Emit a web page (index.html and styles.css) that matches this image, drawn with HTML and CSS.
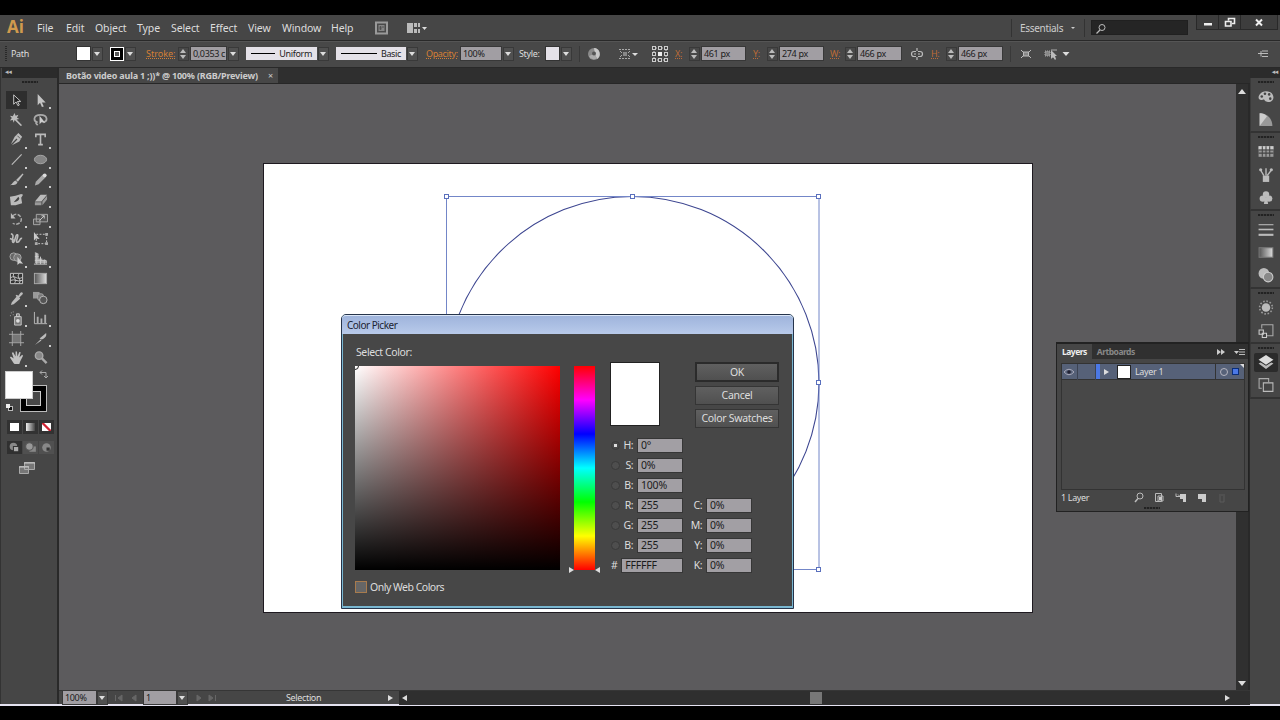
FILE: index.html
```
<!DOCTYPE html>
<html lang="en">
<head>
    <meta charset="UTF-8">
    <meta name="viewport" content="width=device-width, initial-scale=1.0">
    <title>Botão video aula 1</title>
    <link rel="stylesheet" href="styles.css">
</head>
<body>

    <div class="app">
        <header class="menubar">
            <div class="logo">Ai</div>
            <nav class="menus">
                <span class="m-file">File</span>
                <span class="m-edit">Edit</span>
                <span class="m-object">Object</span>
                <span class="m-type">Type</span>
                <span class="m-select">Select</span>
                <span class="m-effect">Effect</span>
                <span class="m-view">View</span>
                <span class="m-window">Window</span>
                <span class="m-help">Help</span>
            </nav>
            <svg class="bridge" width="14" height="14" viewBox="0 0 14 14"><rect x="1" y="1.500" width="11" height="11" fill="#4a4a4a" stroke="#9a9a9a" stroke-width="2"/><rect x="3.500" y="4" width="6" height="6" fill="#858585"/><path d="M5 5.500h1v3h-1zM7 6h2" fill="#444" stroke="#555"/></svg>
            <svg class="arrange" width="22" height="14" viewBox="0 0 22 14"><path d="M1 2h6v10h-6zM8 2h3v4h-3zM12 2h2v4h-2zM8 8h3v4h-3zM12 8h2v4h-2z" fill="#bbb"/><path d="M16 6h5l-2.500 3z" fill="#ddd"/></svg>
            <div class="workspace">Essentials <i class="caret"></i></div>
            <div class="search">
                <svg width="12" height="12" viewBox="0 0 12 12"><circle cx="7" cy="4.500" r="3" fill="none" stroke="#bbb"/><path d="M5 7L1.500 10.500" stroke="#bbb" stroke-width="1.300"/></svg>
            </div>
            <div class="window-buttons">
                <span><svg width="12" height="11" viewBox="0 0 12 11"><path d="M2 6h8v2.500h-8z" fill="#eee"/></svg></span>
                <span><svg width="12" height="11" viewBox="0 0 12 11"><path d="M4.500 3.500v-2h6v5h-2.500M1.500 4.500h5.500v4.500h-5.500z" fill="none" stroke="#eee" stroke-width="1.600"/></svg></span>
                <span class="close"><svg width="12" height="11" viewBox="0 0 12 11"><path d="M3 2.500l6 6M9 2.500l-6 6" stroke="#eee" stroke-width="2"/></svg></span>
            </div>
        </header>

        <div class="controls">
            <i class="grip-v"></i>
            <span class="c-path">Path</span>
            <i class="swatch fill"></i><i class="drop"></i>
            <i class="swatch stroke"></i><i class="drop"></i>
            <span class="c-stroke link">Stroke:</span>
            <i class="spin"></i><span class="field w36">0,0353 c</span><i class="drop"></i>
            <span class="line-field profile"><b></b>Uniform</span><i class="drop"></i>
            <span class="line-field brush"><b></b>Basic</span><i class="drop"></i>
            <span class="c-opacity link">Opacity:</span>
            <span class="field w40">100%</span><i class="drop"></i>
            <span class="c-style">Style:</span>
            <i class="swatch style"></i><i class="drop"></i>
            <i class="sep"></i>
            <svg class="c-recolor" width="14" height="14" viewBox="0 0 14 14"><circle cx="7" cy="7" r="6" fill="#8a8a8a"/><path d="M7 1a6 6 0 0 1 3 11l-2-5z" fill="#c8c8c8"/><path d="M2 9a5 5 0 0 0 8 2l-3-4z" fill="#aaa"/><circle cx="7" cy="6.500" r="2" fill="#555"/></svg>
            <svg class="c-align" width="20" height="12" viewBox="0 0 20 12"><path d="M1 1.500h12M1 10.500h12" stroke="#aaa" stroke-dasharray="2 1"/><path d="M2 3l2 2M12 3l-2 2M2 9l2-2M12 9l-2-2" stroke="#aaa"/><path d="M5 4h4v4h-4z" fill="#888"/><path d="M14 5h6l-3 3z" fill="#ddd"/></svg>
            <svg class="c-ref" width="16" height="16" viewBox="0 0 16 16"><g fill="none" stroke="#ccc"><path d="M2 2h12v12h-12z" stroke-dasharray="1 1"/><g fill="#444"><rect x=".5" y=".5" width="3" height="3"/><rect x="6.500" y=".5" width="3" height="3"/><rect x="12.500" y=".5" width="3" height="3"/><rect x=".5" y="6.500" width="3" height="3"/><rect x="12.500" y="6.500" width="3" height="3"/><rect x=".5" y="12.500" width="3" height="3"/><rect x="6.500" y="12.500" width="3" height="3"/><rect x="12.500" y="12.500" width="3" height="3"/></g></g><path d="M6 6h4v4h-4z" fill="#eee"/></svg>
            <span class="c-x link dim">X:</span><i class="spin"></i><span class="field w45">461 px</span>
            <span class="c-y link dim">Y:</span><i class="spin"></i><span class="field w45">274 px</span>
            <span class="c-w link dim">W:</span><i class="spin"></i><span class="field w45">466 px</span>
            <svg class="c-link" width="14" height="14" viewBox="0 0 14 14"><path d="M6 4.500h-2a2.500 2.500 0 0 0 0 5h2M8 4.500h2a2.500 2.500 0 0 1 0 5h-2M4 7h2M8 7h2M7 1v3M7 10v3" fill="none" stroke="#bbb" stroke-width="1.200"/></svg>
            <span class="c-h link dim">H:</span><i class="spin"></i><span class="field w45">466 px</span>
            <i class="sep far"></i>
            <svg class="c-isolate" width="12" height="12" viewBox="0 0 12 12"><path d="M1 2l2 2M11 2L9 4M1 10l2-2M11 10L9 8" stroke="#bbb"/><rect x="3.500" y="4" width="5" height="4" fill="#888" stroke="#bbb"/></svg>
            <svg class="c-similar" width="27" height="14" viewBox="0 0 27 14"><path d="M1 4h5v5h-5z" fill="#888" stroke="#aaa" stroke-dasharray="1 1"/><path d="M7 3h6M8 10h3" stroke="#aaa"/><path d="M7 3v9l2-2 2 3 1-1-1-3h2z" fill="#bbb"/><path d="M18.500 5h7l-3.500 4z" fill="#ddd"/></svg>
            <svg class="c-menu" width="12" height="10" viewBox="0 0 12 10"><path d="M5 2h6M1 4.500h10M5 7.500h6M4 2v5.500" fill="none" stroke="#bbb"/></svg>
        </div>

        <div class="workarea">
            <aside class="tools">
                <div class="collapse">◂◂</div>
                <i class="grip-h"></i>
                <div class="tool-grid">
                    <span class="on"><svg viewBox="0 0 16 16"><path d="M5 2v10l2.500-2.500 2 4 1.500-.7-2-3.800h3.500z" fill="#222" stroke="#ccc"/></svg></span>
                    <span class="more"><svg viewBox="0 0 16 16"><path d="M5 1v12l2.500-2.500 2 4.500 2-.7-2-4.300h4z" fill="#c4c4c4"/></svg></span>
                    <span><svg viewBox="0 0 16 16"><path d="M6 1l1 3 3-1-1.500 3 2.500 1.500-3 .5L14 14l-1.500 1L6 8.500l-1 3-1-3-3 .5 2-2.500L1 4l3 .5z" fill="#bbb"/></svg></span>
                    <span><svg viewBox="0 0 16 16"><path d="M5 11c-5-1-5-8 3-8s8 7 3 8M4 10c-2 2 0 3 1 4" fill="none" stroke="#aaa" stroke-width="1.800"/><path d="M7 4v9l2-2 4 .5z" fill="#ccc"/></svg></span>
                    <span class="more"><svg viewBox="0 0 16 16"><path d="M10 1l4 4-3 5-8 4 6-6-1-1-6 6 4-8z" fill="#bbb"/><path d="M9 4l3 3" stroke="#555"/></svg></span>
                    <span class="more"><svg viewBox="0 0 16 16"><path d="M3 5.500v-3h10v3M8 2.500v11M5.500 13.500h5" fill="none" stroke="#bbb" stroke-width="1.700"/></svg></span>
                    <span class="more"><svg viewBox="0 0 16 16"><path d="M3 13.500L13.500 2.500" stroke="#bbb" stroke-width="1.200"/></svg></span>
                    <span class="more"><svg viewBox="0 0 16 16"><ellipse cx="8" cy="8" rx="6.500" ry="4.500" fill="#858585" stroke="#aaa"/></svg></span>
                    <span class="more"><svg viewBox="0 0 16 16"><path d="M14.500 1.500l1 1-6 8-2-2zM7 9l2 2c-1 3-4 3-8 3 3-1 3-4 6-5z" fill="#bbb"/></svg></span>
                    <span class="more"><svg viewBox="0 0 16 16"><path d="M11 2l3 3-8 8-4 1.500 1-4z" fill="#aaa"/><circle cx="12.500" cy="3.500" r="2" fill="#ddd"/></svg></span>
                    <span><svg viewBox="0 0 16 16"><path d="M1 5l6-1 6-2 2 1-2 3 1 6-7 2H2z" fill="#bbb"/><path d="M5 11l5-6 1 2c-1 3-3 3-6 4z" fill="#444"/></svg></span>
                    <span class="more"><svg viewBox="0 0 16 16"><path d="M8 3h7l-6 7H2z" fill="#bbb"/><path d="M2 11h7v3H2zM10 10l5-6v4l-5 6z" fill="#999"/></svg></span>
                    <span class="more"><svg viewBox="0 0 16 16"><path d="M4 4c5-4 10 1 9 5s-6 5-9 3" fill="none" stroke="#aaa" stroke-width="1.600" stroke-dasharray="4 1.500"/><path d="M2 1v6h5z" fill="#bbb"/></svg></span>
                    <span class="more"><svg viewBox="0 0 16 16"><path d="M3.500 2.500h12v8h-12zM.500 7.500h7v6h-7z" fill="#555" stroke="#aaa"/><path d="M7 9l5-5M12 7V4H9" fill="none" stroke="#ccc"/></svg></span>
                    <span class="more"><svg viewBox="0 0 16 16"><path d="M2 3c5 1 0 7 2 9s3-9 5-8-3 8 0 8 2-5 5-4M1 8l5 2" fill="none" stroke="#bbb" stroke-width="1.700"/></svg></span>
                    <span><svg viewBox="0 0 16 16"><path d="M3.500 3.500h11v10h-11z" fill="none" stroke="#ccc" stroke-dasharray="2 1.500"/><path d="M1 1v9l2-2 4 .5z" fill="#ccc"/><path d="M2 12h3v3H2zM13 12h3v3h-3zM13 2h3v3h-3z" fill="#aaa"/></svg></span>
                    <span class="more"><svg viewBox="0 0 16 16"><circle cx="5" cy="6" r="4" fill="#666" stroke="#aaa"/><circle cx="9" cy="7" r="4" fill="#777" stroke="#aaa"/><path d="M9 6v9l2-2 4 .5z" fill="#ccc"/></svg></span>
                    <span class="more"><svg viewBox="0 0 16 16"><path d="M2 1l4 2v10H2zM6 8h4v5H6zM10 10h5v3h-5z" fill="#aaa"/><path d="M4 2v12M2 6h4M2 10h12M8 6v8M12 9v5M1 14h14" stroke="#ccc"/></svg></span>
                    <span><svg viewBox="0 0 16 16"><path d="M1.500 2.500h13v11h-13z" fill="#333" stroke="#ccc"/><path d="M2 7c5-3 6 3 12 0M5 3c-2 4 4 5 1 10M11 3c-4 3 3 6 0 10M2 10c4-2 6 2 12 0" fill="none" stroke="#ccc"/></svg></span>
                    <span><svg viewBox="0 0 16 16"><defs><linearGradient id="grey"><stop stop-color="#555"/><stop offset="1" stop-color="#ddd"/></linearGradient></defs><rect x="1.500" y="2.500" width="13" height="11" fill="url(#grey)" stroke="#aaa"/></svg></span>
                    <span class="more"><svg viewBox="0 0 16 16"><path d="M10 5l2-3c2-2 4 1 2 2l-3 3 1 1-1 1-4-4 1-1zM8 6l3 3-6 5-3 1 1-3z" fill="#bbb"/></svg></span>
                    <span><svg viewBox="0 0 16 16"><rect x="0" y="1" width="7" height="7" fill="#999"/><rect x="5" y="3" width="6" height="7" rx="2" fill="#777" stroke="#aaa"/><circle cx="11" cy="9.500" r="4" fill="#555" stroke="#bbb"/></svg></span>
                    <span class="more"><svg viewBox="0 0 16 16"><path d="M6 6h7v9H6zM8 3h3v3H8z" fill="#777" stroke="#ccc"/><circle cx="9.500" cy="10.500" r="2" fill="#ddd"/><path d="M2 2h1M4 4h1M1 5h1M4 1h1" stroke="#aaa"/></svg></span>
                    <span class="more"><svg viewBox="0 0 16 16"><path d="M1.500 1v12.500H15" fill="none" stroke="#bbb"/><path d="M4 6h2v7H4zM8 8h2v5H8zM12 4h2v9h-2z" fill="#aaa"/></svg></span>
                    <span><svg viewBox="0 0 16 16"><rect x="4" y="4" width="8" height="8" fill="#777"/><path d="M3.500 0v16M12.500 0v16M0 3.500h16M0 12.500h16" stroke="#aaa"/></svg></span>
                    <span class="more"><svg viewBox="0 0 16 16"><path d="M14 2c1 4-2 6-5 7L7 8zM8 9l1 1-7 5z" fill="#bbb"/></svg></span>
                    <span class="more"><svg viewBox="0 0 16 16"><path d="M5 14L1 8l1-1 3 2L3 3l1.500-.5L7 7V1.500h1.500L9 7l2-5 1.500.5L11 8l3-3 1 1-3 6-1 3H6z" fill="#c2c2c2"/></svg></span>
                    <span><svg viewBox="0 0 16 16"><circle cx="6.500" cy="6" r="4" fill="#888" stroke="#aaa" stroke-width="1.500"/><path d="M9.500 9l5 5" stroke="#aaa" stroke-width="2.500"/></svg></span>
                </div>
                <div class="paint">
                    <i class="paint-stroke"></i>
                    <i class="paint-fill"></i>
                    <svg class="swap" width="9" height="9" viewBox="0 0 9 9"><path d="M1 2.500h6v5M3 .5L1 2.500l2 2M5 6l2 2 2-2" fill="none" stroke="#aaa"/></svg>
                    <svg class="default" width="9" height="9" viewBox="0 0 9 9"><rect x="3.500" y="3.500" width="4" height="4" stroke="#bbb" fill="#111"/><rect x="1" y="1" width="4" height="4" fill="#eee"/></svg>
                </div>
                <div class="paint-modes"><i class="solid"></i><i class="gradient"></i><i class="none"></i></div>
                <div class="draw-modes">
                    <svg class="on" viewBox="0 0 14 12"><circle cx="6" cy="5" r="3.500" fill="#888"/><path d="M6 5h5v5H6z" fill="#aaa" stroke="#333"/></svg>
                    <svg viewBox="0 0 14 12"><path d="M6 5h6v5H6z" fill="#888"/><circle cx="6" cy="5" r="3.500" fill="#999" stroke="#555"/></svg>
                    <svg viewBox="0 0 14 12"><circle cx="7" cy="6" r="4" fill="#888"/><path d="M7 6h3v3H7z" fill="#333"/></svg>
                </div>
                <svg class="screen-mode" width="18" height="14" viewBox="0 0 18 14"><path d="M6.500 1.500h10v7h-10zM1.500 5.500h9v7h-9z" fill="#777" stroke="#aaa"/><path d="M6 2h11M1 6h10" stroke="#ccc"/></svg>
            </aside>

            <main class="document">
                <div class="tabs"><div class="tab">Botão video aula 1 ;))* @ 100% (RGB/Preview)<span>×</span></div></div>
                <div class="view">
                    <div class="canvas">
                        <div class="artboard"></div>
                        <svg class="artwork" width="376" height="376" viewBox="0 0 376 376">
                            <circle cx="187.500" cy="188" r="186.500" fill="none" stroke="#3c4590" stroke-width="1.100"/>
                            <path d="M1.500 1.500h372.500v373h-372.500z" stroke="#7386c8" fill="none"/>
                            <g stroke="#5a70bd" fill="#fff">
                                <rect x="-.5" y="-.5" width="4" height="4"/><rect x="185.500" y="-.5" width="4" height="4"/><rect x="371.500" y="-.5" width="4" height="4"/>
                                <rect x="371.500" y="185.500" width="4" height="4"/><rect x="371.500" y="372.500" width="4" height="4"/>
                            </g>
                        </svg>
                    </div>
                    <div class="scroll-y"><i class="up"></i><i class="down"></i></div>
                </div>
                <div class="status">
                    <span class="field zoom">100%</span><i class="drop"></i>
                    <svg class="nav" width="34" height="8" viewBox="0 0 34 8"><path d="M6.500 1v6M13 1L9 4l4 3zM27 1l-4 3 4 3z" fill="#666" stroke="#666"/></svg>
                    <span class="field page">1</span><i class="drop"></i>
                    <svg class="nav" width="34" height="8" viewBox="0 0 34 8"><path d="M8 1l4 3-4 3zM20 1l4 3-4 3zM26.500 1v6" fill="#666" stroke="#666"/></svg>
                    <span class="current-tool">Selection</span>
                    <i class="right"></i>
                    <div class="scroll-x"><i class="left"></i><b></b><i class="right"></i></div>
                </div>
            </main>

            <aside class="dock">
                <div class="collapse">◂◂</div>
                <div class="dock-group g2">
                    <i class="grip-h"></i>
                    <svg viewBox="0 0 16 16"><path d="M8 3c5 0 7 3 7 6s-3 5-6 4-2-3-4-2-4 0-4-2 2-6 7-6z" fill="#bbb"/><g fill="#444"><circle cx="4" cy="8" r="1.200"/><circle cx="7" cy="5.500" r="1.200"/><circle cx="11" cy="6" r="1.200"/><circle cx="12" cy="10" r="1.200"/></g></svg>
                    <svg viewBox="0 0 16 16"><path d="M2 2c7 0 12 5 12 12H2z" fill="#999"/><path d="M2 2c4 0 5 1 7 3l-7 9z" fill="#ccc"/></svg>
                </div>
                <div class="dock-group g3">
                    <i class="grip-h"></i>
                    <svg viewBox="0 0 16 16"><path d="M1 3h14v10H1z" fill="#999"/><path d="M1 3h14v3H1z" fill="#ccc"/><path d="M1 6.500h14M1 9.500h14M4.500 3v10M8 3v10M11.500 3v10" stroke="#444"/></svg>
                    <svg viewBox="0 0 16 16"><path d="M5 9h6v6H5z" fill="#bbb"/><path d="M6 9L3 4M8 9V2M9 9l4-5" stroke="#bbb" stroke-width="1.300"/><circle cx="3" cy="3.500" r="1.500" fill="#bbb"/><circle cx="13" cy="3.500" r="1.500" fill="#bbb"/></svg>
                    <svg viewBox="0 0 16 16"><circle cx="8" cy="5" r="3" fill="#bbb"/><circle cx="5" cy="9" r="3" fill="#bbb"/><circle cx="11" cy="9" r="3" fill="#bbb"/><path d="M7 8h2l1 6H6z" fill="#bbb"/></svg>
                </div>
                <div class="dock-group g3">
                    <i class="grip-h"></i>
                    <svg viewBox="0 0 16 16"><path d="M1 3.500h14" stroke="#bbb"/><path d="M1 8h14" stroke="#bbb" stroke-width="1.500"/><path d="M1 13h14" stroke="#bbb" stroke-width="2"/></svg>
                    <svg viewBox="0 0 16 16"><rect x="1.500" y="3.500" width="13" height="9" fill="url(#grey)" stroke="#777"/></svg>
                    <svg viewBox="0 0 16 16"><circle cx="6" cy="6" r="5" fill="#bbb"/><circle cx="10" cy="9.500" r="4.500" fill="#888" stroke="#ccc"/></svg>
                </div>
                <div class="dock-group g2b">
                    <i class="grip-h"></i>
                    <svg viewBox="0 0 16 16"><circle cx="8" cy="8" r="4" fill="#bbb"/><circle cx="8" cy="8" r="6" fill="none" stroke="#999" stroke-width="1.500" stroke-dasharray="1.500 1.600"/></svg>
                    <svg viewBox="0 0 16 16"><path d="M4 6V2.500h10.500v10.500H9" fill="none" stroke="#aaa"/><path d="M1.500 7.500h4v4h-4zM4.500 10.500h4v4h-4z" fill="#444" stroke="#ccc"/></svg>
                </div>
                <div class="dock-group g2">
                    <i class="grip-h"></i>
                    <svg class="on" viewBox="0 0 16 16"><path d="M8 1l7 4.500L8 10 1 5.500z" fill="#ddd"/><path d="M1 9l2-1 5 3 5-3 2 1-7 5z" fill="#bbb"/></svg>
                    <svg viewBox="0 0 16 16"><path d="M4 10.500H1.500v-9h9V5" fill="none" stroke="#aaa"/><path d="M5.500 5.500h9v8h-9z" fill="#444" stroke="#bbb"/></svg>
                </div>
            </aside>
        </div>
    </div>

    <section class="layers">
        <div class="layers-tabs">
            <span class="active">Layers</span><span>Artboards</span>
            <svg width="30" height="10" viewBox="0 0 30 10"><path d="M1 2l4 3-4 3zM5 2l4 3-4 3zM18 4h5l-2.500 3z" fill="#ccc"/><path d="M23 2.500h6M23 5h6M23 7.500h6" stroke="#bbb"/></svg>
        </div>
        <div class="layers-list">
            <div class="layer">
                <span class="eye"><svg width="12" height="8" viewBox="0 0 12 8"><path d="M1 4q5-5.500 10 0q-5 5.500-10 0z" fill="none" stroke="#aab"/><circle cx="6" cy="4" r="1.800" fill="#223"/></svg></span>
                <span class="lock"></span>
                <i class="layer-color"></i>
                <i class="right"></i>
                <i class="thumb"></i>
                <span class="layer-name">Layer 1</span>
                <span class="target"><i class="ring"></i><i class="selected"></i></span>
                <i class="corner"></i>
            </div>
        </div>
        <div class="layers-footer">
            <span>1 Layer</span>
            <svg width="94" height="11" viewBox="0 0 94 11"><g fill="none" stroke="#bbb"><circle cx="6" cy="4" r="3"/><path d="M4 6.500L1 10" stroke-width="1.500"/><path d="M21.500 1.500h6v8h-6zM24 4h5v5h-5z"/><path d="M42 1.500v3h4M44 2.500l2 2"/></g><path d="M25 5h3v3h-3zM46 2h6v8h-3V7h-3zM64 2h8v8h-4V7h-4z" fill="#ccc"/><path d="M85 3h6M86 4v6h4V4" fill="none" stroke="#5a5a5a"/></svg>
        </div>
        <i class="grip-h"></i>
    </section>

    <section class="dialog">
        <div class="dialog-title">Color Picker</div>
        <div class="dialog-body">
            <div class="picker">
                <div class="select-label">Select Color:</div>
                <div class="spectra">
                    <div class="spectrum"><i class="marker"></i></div>
                    <div class="hue"><i class="right"></i><i class="left"></i></div>
                </div>
                <label class="web"><i></i>Only Web Colors</label>
            </div>
            <div class="values">
                <div class="top">
                    <div class="preview"></div>
                    <div class="buttons">
                        <button class="ok">OK</button>
                        <button>Cancel</button>
                        <button>Color Swatches</button>
                    </div>
                </div>
                <div class="numbers">
                    <i class="radio checked"></i><label>H:</label><span class="value">0°</span><label></label><span></span>
                    <i class="radio"></i><label>S:</label><span class="value">0%</span><label></label><span></span>
                    <i class="radio"></i><label>B:</label><span class="value">100%</span><label></label><span></span>
                    <i class="radio"></i><label>R:</label><span class="value">255</span><label>C:</label><span class="value">0%</span>
                    <i class="radio"></i><label>G:</label><span class="value">255</span><label>M:</label><span class="value">0%</span>
                    <i class="radio"></i><label>B:</label><span class="value">255</span><label>Y:</label><span class="value">0%</span>
                    <div class="hex"><label>#</label><span class="value">FFFFFF</span></div><label>K:</label><span class="value">0%</span>
                </div>
            </div>
        </div>
    </section>

</body>
</html>
```

FILE: styles.css
```
* {
    margin: 0;
    padding: 0;
    box-sizing: border-box;
}

body {
    width: 1280px;
    height: 720px;
    overflow: hidden;
    background-color: #000;
    font-family: "Noto Sans", "Open Sans", sans-serif;
    font-size: 9px;
    letter-spacing: -0.35px;
    color: #ddd;
    white-space: nowrap;
}

svg {
    display: block;
    flex: none;
}

i, b {
    display: block;
    flex: none;
}

.app {
    display: flex;
    flex-direction: column;
    margin-top: 15px;
    height: 691px;
    border-bottom: 2px solid #e4e2f0;
}

/* menu bar */
.menubar {
    display: flex;
    align-items: center;
    height: 26px;
    background-color: #464646;
    border-bottom: 1px solid #292929;
    letter-spacing: 0;
}

.logo {
    width: 37px;
    padding-left: 7px;
    font: bold 17px/22px "Open Sans", sans-serif;
    color: #d09a4e;
    margin-top: -2px;
}

.menus {
    display: flex;
    width: 338px;
    font-size: 10.5px;
    letter-spacing: -0.1px;
}

.m-file { width: 29px; }
.m-edit { width: 29px; }
.m-object { width: 42px; }
.m-type { width: 34px; }
.m-select { width: 39px; }
.m-effect { width: 38px; }
.m-view { width: 34px; }
.m-window { width: 49px; }

.arrange {
    margin-left: 17px;
}

.workspace {
    display: flex;
    align-items: center;
    gap: 8px;
    width: 74px;
    height: 18px;
    margin-left: 583px;
    padding-left: 8px;
    border-left: 1px solid #333;
    border-right: 1px solid #333;
    font-size: 10px;
    letter-spacing: -0.3px;
    color: #ccc;
}

.caret {
    border: 2px solid transparent;
    border-top-color: #ccc;
    border-bottom: 0;
}

.search {
    width: 97px;
    height: 15px;
    margin-left: 6px;
    margin-top: -1px;
    padding: 2px 3px;
    background-color: #252525;
    border: 1px solid #202020;
}

.window-buttons {
    display: flex;
    align-self: flex-start;
    height: 15px;
    margin-left: 8px;
    border: 1px solid #292929;
    border-top: 0;
    background-color: #3d3d3d;
}

.window-buttons span {
    display: flex;
    align-items: center;
    justify-content: center;
    width: 22px;
    border-right: 1px solid #292929;
}

.window-buttons .close {
    width: 36px;
    border: 0;
}

/* control bar */
.controls {
    display: flex;
    align-items: center;
    height: 27px;
    padding-bottom: 2px;
    background-color: #484848;
    border-top: 1px solid #555;
    border-bottom: 1px solid #292929;
}

.grip-v {
    width: 2px;
    height: 15px;
    margin: 0 4px 0 5px;
    background: repeating-linear-gradient(#292929 0 1px, transparent 1px 2px);
}

.c-path { width: 65px; }

.swatch {
    width: 15px;
    height: 15px;
    background-color: #fff;
    border: 1px solid #333;
}

.swatch.stroke {
    width: 14px;
    height: 14px;
    margin-left: 7px;
    border: 1px solid #fff;
    background: linear-gradient(#555, #555) center / 4px 4px no-repeat, linear-gradient(#fff, #fff) center / 6px 6px no-repeat, #000;
}

.swatch.style {
    background-color: #e4e1e8;
}

.drop {
    width: 11px;
    height: 14px;
    margin-left: 1px;
    border: 1px solid #393939;
    background: #505050;
    position: relative;
}

.drop::after {
    content: "";
    position: absolute;
    left: 1px;
    top: 4px;
    border: 3.5px solid transparent;
    border-top: 4px solid #ddd;
    border-bottom: 0;
}

.link {
    color: #d57f35;
    text-decoration: underline dotted 1px;
}

.dim {
    color: #bd6b36;
}

.c-stroke {
    width: 32px;
    margin-left: 10px;
    letter-spacing: 0;
}

.spin {
    position: relative;
    width: 11px;
    height: 14px;
    margin-right: 1px;
    border: 1px solid #393939;
}

.spin::before, .spin::after {
    content: "";
    position: absolute;
    left: 1px;
    top: 1px;
    border: 3.5px solid transparent;
    border-top: 0;
    border-bottom: 4px solid #bbb;
}

.spin::after {
    top: 7px;
    border-top: 4px solid #bbb;
    border-bottom: 0;
}

.field {
    flex: none;
    height: 15px;
    padding-left: 2px;
    background-color: #a19ea3;
    border: 1px solid #383838;
    line-height: 13px;
    color: #1c1c1c;
    overflow: hidden;
}

.w36 { width: 37px; }
.w40 { width: 42px; }
.w45 { width: 45px; }

.line-field {
    display: flex;
    align-items: center;
    justify-content: flex-end;
    gap: 4px;
    height: 13px;
    margin-left: 7px;
    padding-right: 5px;
    background-color: #e4e1e8;
    color: #222;
}

.line-field b {
    flex: 1;
    height: 1px;
    margin-left: 5px;
    background-color: #000;
}

.profile { width: 71px; }
.brush { width: 70px; }

.c-opacity {
    width: 34px;
    margin-left: 8px;
}

.c-style {
    width: 26px;
    margin-left: 5px;
}

.sep {
    width: 1px;
    height: 16px;
    margin-left: 7px;
    background-color: #393939;
}

.c-recolor { margin-left: 7px; }
.c-align { margin-left: 17px; }
.c-ref { margin-left: 14px; }

.c-x, .c-y, .c-w {
    width: 14px;
    margin-left: 7px;
}

.c-w {
    width: 15px;
    margin-left: 6px;
}

.c-link { margin-left: 8px; }

.c-h {
    width: 15px;
    margin-left: 7px;
}

.c-isolate { margin-left: 9px; }
.c-similar { margin-left: 12px; }

.c-menu {
    margin-left: auto;
    margin-right: 11px;
}

/* work area */
.workarea {
    display: flex;
    flex: 1;
    min-height: 0;
}

.collapse {
    height: 10px;
    padding-left: 3px;
    background-color: #2b2b2b;
    font: 7px/9px "DejaVu Sans", sans-serif;
    color: #bbb;
}

.grip-h {
    width: 16px;
    height: 2px;
    margin: 0 auto;
    background: repeating-linear-gradient(90deg, #222 0 2px, #3a3a3a 2px 3px);
}

.tools {
    width: 59px;
    padding-left: 1px;
    background-color: #464646;
    border-right: 2px solid #292929;
    border-left: 1px solid #333;
}

.tools > .grip-h {
    margin-top: 3px;
}

.tool-grid {
    display: grid;
    grid-template-columns: 24px 24px;
    grid-template-rows: repeat(14, 19.85px);
    margin: 8px 0 0 4px;
}

.tool-grid span {
    position: relative;
    width: 21px;
    height: 18px;
    padding: 1.5px 3px;
}

.tool-grid svg {
    width: 15px;
    height: 15px;
}

.tool-grid .on {
    background-color: #2e2e2e;
}

.tool-grid .more::after {
    content: "";
    position: absolute;
    right: 0;
    bottom: 0;
    width: 2px;
    height: 2px;
    background-color: #ccc;
}

.paint {
    position: relative;
    height: 43px;
    margin-top: 1px;
}

.paint-fill, .paint-stroke, .swap, .default {
    position: absolute;
}

.paint-fill {
    left: 3px;
    top: 1px;
    width: 28px;
    height: 28px;
    background-color: #fff;
    border: 1px solid #ccc;
}

.paint-stroke {
    left: 18px;
    top: 15px;
    width: 27px;
    height: 27px;
    background-color: #484848;
    border: 6px solid #000;
    outline: 1px solid #bbb;
    outline-offset: -1px;
    box-shadow: inset 0 0 0 1px #ccc;
}

.swap { left: 37px; top: 0; }
.default { left: 3px; top: 33px; }

.paint-modes, .draw-modes {
    display: flex;
    width: 49px;
    margin: 7px 0 0 5px;
    gap: 1px;
}

.paint-modes i {
    width: 15px;
    height: 14px;
    border: 3px solid #323232;
    background-color: #fff;
}

.paint-modes .gradient {
    background: linear-gradient(90deg, #eee, #444);
    background-clip: padding-box;
}

.paint-modes .none {
    background: linear-gradient(135deg, #fff 40%, #cf2231 42% 58%, #fff 60%);
    transform: scaleX(-1);
}

.draw-modes svg {
    width: 15px;
    height: 13px;
    background-color: #505050;
}

.draw-modes .on {
    background-color: #303030;
}

.screen-mode {
    margin: 7px 0 0 16px;
}

.document {
    display: flex;
    flex: 1;
    flex-direction: column;
    min-width: 0;
}

.tabs {
    height: 16px;
    background-color: #2f2f2f;
    border-bottom: 1px solid #272727;
}

.tab {
    display: flex;
    justify-content: space-between;
    width: 219px;
    height: 15px;
    padding: 0 5px 0 7px;
    background-color: #474747;
    font-weight: bold;
    line-height: 15px;
    letter-spacing: -0.2px;
    color: #ccc;
}

.tab span {
    font-weight: normal;
}

.view {
    display: flex;
    flex: 1;
}

/* drawing surface, artwork is placed freely on it */
.canvas {
    position: relative;
    flex: 1;
    background-color: #5c5b5d;
}

.artboard {
    position: absolute;
    left: 204px;
    top: 79px;
    width: 770px;
    height: 450px;
    background-color: #fff;
    border: 1px solid #1e1a20;
}

.artwork {
    position: absolute;
    left: 386px;
    top: 111px;
    overflow: visible;
}

.scroll-y {
    display: flex;
    flex-direction: column;
    align-items: center;
    justify-content: space-between;
    width: 14px;
    padding: 5px 0 4px;
    background-color: #303030;
    border-right: 2px solid #292929;
}

.up, .down {
    border: 4px solid transparent;
    border-top: 0;
    border-bottom: 5px solid #ddd;
}

.down {
    border-top: 5px solid #ddd;
    border-bottom: 0;
}

.left, .right {
    border: 3.5px solid transparent;
    border-right: 5px solid #ddd;
    border-left: 0;
}

.right {
    border-left: 5px solid #ddd;
    border-right: 0;
}

.status {
    display: flex;
    align-items: center;
    height: 14px;
    padding-left: 3px;
    background-color: #464646;
    border-top: 1px solid #363636;
}

.zoom { width: 35px; }
.page { width: 34px; }
.status .nav { width: 34px; }
.status .drop { margin-left: 0; }
.status .nav { margin-left: 1px; }

.current-tool {
    width: 102px;
    margin-left: 63px;
}

.scroll-x {
    display: flex;
    align-items: center;
    justify-content: space-between;
    flex: 1;
    height: 14px;
    margin-left: 6px;
    padding: 0 20px 0 3px;
    background-color: #2f2f2f;
}

.scroll-x b {
    width: 12px;
    height: 12px;
    background-color: #777;
}

.dock {
    width: 30px;
    background-color: #464646;
}

.dock .collapse {
    padding: 0 2px 0 0;
    text-align: right;
}

.dock-group {
    display: flex;
    flex-direction: column;
    align-items: center;
    border-bottom: 2px solid #333;
    border-left: 1px solid #3a3a3a;
}

.dock-group .grip-h {
    margin: 3px 0 4px;
}

.dock-group svg {
    width: 24px;
    height: 19px;
    padding: 1px 3px;
    margin-bottom: 4px;
}

.dock-group .on {
    background-color: #2b2b2b;
    border-radius: 2px;
}

.g2 { height: 55px; }
.g3 { height: 78px; }
.g2b { height: 55px; }

/* layers panel */
.layers {
    position: absolute;
    left: 1056px;
    top: 342px;
    width: 193px;
    height: 170px;
    padding: 2px 3px 0 1px;
    background-color: #464646;
    border: 1px solid #222;
    border-top-width: 2px;
}

.layers-tabs {
    display: flex;
    align-items: center;
    height: 15px;
    margin: -2px -3px 0 -1px;
    background-color: #303030;
    font-weight: bold;
    font-size: 8.5px;
    letter-spacing: -0.5px;
    color: #888;
}

.layers-tabs span {
    padding: 0 5px;
    line-height: 15px;
}

.layers-tabs .active {
    background-color: #464646;
    color: #eee;
}

.layers-tabs svg {
    margin: 0 2px 0 auto;
}

.layers-list {
    height: 127px;
    margin: 4px 0 0 3px;
    border: 1px solid #333;
    background-color: #484848;
}

.layer {
    position: relative;
    display: flex;
    align-items: center;
    height: 16px;
    background-color: #566178;
    border-bottom: 1px solid #333;
}

.eye, .lock {
    width: 16px;
    height: 16px;
    padding: 4px 1px;
    border-right: 1px solid #3c4353;
}

.lock {
    width: 18px;
}

.layer-color {
    width: 4px;
    height: 15px;
    background-color: #4b78e6;
}

.layer > .right {
    margin-left: 4px;
}

.thumb {
    width: 14px;
    height: 14px;
    margin-left: 8px;
    background-color: #fff;
    border: 1px solid #222;
}

.layer-name {
    flex: 1;
    padding-left: 4px;
}

.target {
    display: flex;
    align-items: center;
    gap: 4px;
    height: 16px;
    padding: 0 5px 0 4px;
    border-left: 1px solid #333;
}

.ring {
    width: 8px;
    height: 8px;
    border: 1px solid #b5b5c0;
    border-radius: 50%;
}

.selected {
    width: 7px;
    height: 7px;
    background-color: #4b78e6;
    border: 1px solid #092d79;
}

.corner {
    position: absolute;
    top: 0;
    right: 0;
    border-top: 4px solid #ddd;
    border-left: 4px solid transparent;
}

.layers-footer {
    display: flex;
    align-items: center;
    height: 15px;
    padding-left: 3px;
    line-height: 14px;
}

.layers-footer svg {
    margin-left: auto;
    margin-right: 17px;
}

.layers > .grip-h {
    margin-top: 2px;
}

/* color picker */
.dialog {
    position: absolute;
    left: 341px;
    top: 314px;
    width: 453px;
    height: 295px;
    padding: 0 1px;
    background-color: #79b6d0;
    border: 1px solid #26344b;
    border-radius: 5px 5px 0 0;
    font-size: 10.500px;
    letter-spacing: -0.5px;
}

.dialog-title {
    height: 19px;
    margin: 0 -1px;
    padding-left: 5px;
    border-top: 1px solid #dce7f8;
    border-radius: 4px 4px 0 0;
    background: linear-gradient(#9fb4dc, #b8caea);
    font-size: 10px;
    line-height: 19px;
    color: #1c2433;
}

.dialog-body {
    display: flex;
    height: 272px;
    padding: 10px 12px 0;
    background-color: #474747;
}

.picker {
    width: 256px;
}

.select-label {
    height: 22px;
    padding-left: 1px;
    line-height: 16px;
    letter-spacing: -0.4px;
}

.spectra {
    display: flex;
    gap: 14px;
}

.spectrum {
    position: relative;
    width: 205px;
    height: 204px;
    overflow: hidden;
    background: linear-gradient(transparent, #000), linear-gradient(90deg, #fff, #f00);
}

.marker {
    position: absolute;
    left: -4px;
    top: -4px;
    width: 8px;
    height: 8px;
    border: 1px solid #222;
    border-radius: 50%;
}

.hue {
    position: relative;
    width: 21px;
    height: 204px;
    background: linear-gradient(#f00, #f0f, #00f, #0ff, #0f0, #ff0, #f00);
}

.hue i {
    position: absolute;
    top: 201px;
}

.hue .right { left: -5px; }
.hue .left { right: -5px; }

.web {
    display: flex;
    align-items: center;
    gap: 3px;
    margin-top: 10px;
}

.web i {
    width: 12px;
    height: 12px;
    background-color: #666;
    border: 1px solid #a87b4d;
}

.top {
    display: flex;
    align-items: flex-start;
    gap: 35px;
    margin-top: 18px;
    height: 73px;
}

.preview {
    width: 50px;
    height: 64px;
    margin-left: -1px;
    background-color: #fff;
    border: 1px solid #222;
}

.buttons {
    display: flex;
    flex-direction: column;
    gap: 4px;
}

.buttons button {
    width: 84px;
    height: 19px;
    background: linear-gradient(#606060, #505050);
    border: 1px solid #353535;
    font: inherit;
    letter-spacing: -0.3px;
    line-height: 15px;
    color: #ddd;
}

.buttons .ok {
    height: 20px;
    border: 2px solid #2b2b2b;
    line-height: 14px;
}

.numbers {
    display: grid;
    grid-template-columns: 9px 17px 46px 23px 46px;
    grid-auto-rows: 20px;
    align-items: center;
}

.numbers label {
    padding-right: 4px;
    text-align: right;
}

.radio {
    width: 9px;
    height: 9px;
    border: 1px solid #3a3a3a;
    border-radius: 50%;
    background-color: #4e4e4e;
}

.radio.checked {
    background: radial-gradient(#ddd 1.500px, #484848 2px);
}

.value {
    height: 15px;
    padding-left: 3px;
    background-color: #a29fa4;
    border: 1px solid #363636;
    line-height: 13px;
    letter-spacing: -0.2px;
    color: #1b1b1b;
}

.hex {
    grid-column: 1 / 4;
    display: flex;
    align-items: center;
}

.hex .value {
    flex: 1;
}
```
